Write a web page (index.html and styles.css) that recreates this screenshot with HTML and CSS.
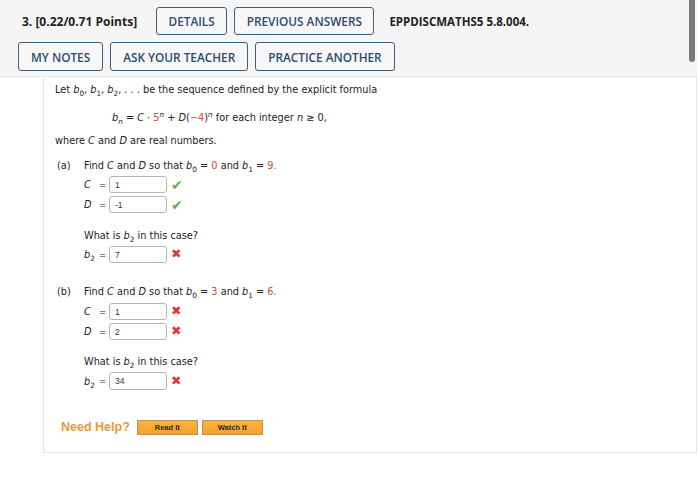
FILE: index.html
```html
<!DOCTYPE html>
<html>
<head>
<meta charset="utf-8">
<link rel="stylesheet" href="styles.css">
</head>
<body>
<div class="page">
  <div class="header">
    <div class="hrow">
      <span class="qnum">3. [0.22/0.71 Points]</span>
      <span class="btn">DETAILS</span>
      <span class="btn">PREVIOUS ANSWERS</span>
      <span class="qid">EPPDISCMATHS5 5.8.004.</span>
    </div>
    <div class="hrow row2">
      <span class="btn">MY NOTES</span>
      <span class="btn">ASK YOUR TEACHER</span>
      <span class="btn">PRACTICE ANOTHER</span>
    </div>
    <div class="scrollbar"></div>
  </div>
  <div class="panel">
    <div class="line l-let">Let <i>b</i><sub>0</sub>, <i>b</i><sub>1</sub>, <i>b</i><sub>2</sub>, . . . be the sequence defined by the explicit formula</div>
    <div class="line l-formula"><i>b</i><sub><i>n</i></sub> = <i>C</i> · <span class="red">5</span><sup><i>n</i></sup> + <i>D</i>(<span class="red">−4</span>)<sup><i>n</i></sup> for each integer <i>n</i> ≥ 0,</div>
    <div class="line l-where">where <i>C</i> and <i>D</i> are real numbers.</div>

    <div class="line part l-a"><span class="plabel">(a)</span><span>Find <i>C</i> and <i>D</i> so that <i>b</i><sub>0</sub> = <span class="red">0</span> and <i>b</i><sub>1</sub> = <span class="red">9.</span></span></div>
    <div class="ans first"><span class="var"><i>C</i></span><span class="eq">=</span><span class="inp">1</span><span class="ok">✔</span></div>
    <div class="ans second"><span class="var"><i>D</i></span><span class="eq">=</span><span class="inp">-1</span><span class="ok">✔</span></div>
    <div class="line sub l-what1">What is <i>b</i><sub>2</sub> in this case?</div>
    <div class="ans b2"><span class="var"><i>b</i><sub>2</sub></span><span class="eq">=</span><span class="inp">7</span><span class="bad">✖</span></div>

    <div class="line part l-b"><span class="plabel">(b)</span><span>Find <i>C</i> and <i>D</i> so that <i>b</i><sub>0</sub> = <span class="red">3</span> and <i>b</i><sub>1</sub> = <span class="red">6.</span></span></div>
    <div class="ans first-b"><span class="var"><i>C</i></span><span class="eq">=</span><span class="inp">1</span><span class="bad">✖</span></div>
    <div class="ans second"><span class="var"><i>D</i></span><span class="eq">=</span><span class="inp">2</span><span class="bad">✖</span></div>
    <div class="line sub l-what2">What is <i>b</i><sub>2</sub> in this case?</div>
    <div class="ans b2b"><span class="var"><i>b</i><sub>2</sub></span><span class="eq">=</span><span class="inp">34</span><span class="bad">✖</span></div>

    <div class="help">
      <span class="needhelp">Need Help?</span>
      <span class="hbtn">Read It</span>
      <span class="hbtn">Watch It</span>
    </div>
  </div>
</div>
</body>
</html>
```
FILE: styles.css
```css
html, body {
  margin: 0;
  padding: 0;
  background: #ffffff;
}
.page {
  width: 700px;
  height: 478px;
  position: relative;
  overflow: hidden;
}
.header {
  position: relative;
  width: 697px;
  height: 77px;
  box-sizing: border-box;
  background: #f5f5f5;
  border-bottom: 1px solid #e9e9e9;
  padding: 7px 0 0 18px;
  font-family: "Open Sans", "Noto Sans", sans-serif;
}
.hrow {
  display: flex;
  align-items: center;
  height: 28px;
}
.row2 {
  margin-top: 7px;
  height: 29px;
}
.row2 .btn {
  padding: 0 12px;
}
.qnum {
  margin-left: 4px;
  margin-right: 16px;
  width: 118px;
  white-space: nowrap;
  font-size: 12px;
  font-weight: 700;
  color: #222;
}
.qid {
  margin-left: 8px;
  font-size: 11.5px;
  font-weight: 700;
  color: #222;
}
.btn {
  box-sizing: border-box;
  height: 100%;
  display: flex;
  align-items: center;
  padding: 0 11.5px;
  margin-right: 7px;
  border: 1.5px solid #3e5d7c;
  border-radius: 3px;
  color: #2d4b6a;
  font-size: 11.8px;
  font-weight: 600;
  background: #f7f7f7;
}
.scrollbar {
  position: absolute;
  left: 689px;
  top: 0;
  width: 6px;
  height: 62px;
  background: #7a7a7a;
  border-radius: 0 0 3px 3px;
}
.panel {
  margin-left: 43px;
  width: 654px;
  height: 376px;
  box-sizing: border-box;
  border-left: 1px solid #e6e6e6;
  border-right: 1px solid #e6e6e6;
  border-bottom: 1px solid #e6e6e6;
  padding: 4px 0 0 11px;
  font-family: "DejaVu Sans", Verdana, sans-serif;
  font-size: 9.75px;
  color: #222;
}
.line {
  height: 15px;
  padding-top: 1px;
  line-height: 16px;
  white-space: nowrap;
}
sub, sup {
  font-size: 75%;
  line-height: 0;
}
sub { vertical-align: -3px; }
sup { vertical-align: 4px; }
.red { color: #d4473f; }
.l-formula { margin-top: 12px; margin-left: 57px; }
.l-where { margin-top: 7px; }
.part { display: flex; margin-left: 2px; }
.plabel { width: 27px; }
.l-a { margin-top: 9px; }
.l-b { margin-top: 20px; }
.sub { margin-left: 29px; }
.l-what1 { margin-top: 14px; }
.l-what2 { margin-top: 13px; }
.ans {
  display: flex;
  align-items: center;
  height: 17px;
  margin-left: 29px;
}
.ans.first { margin-top: 3px; }
.ans.first-b { margin-top: 4px; }
.ans.second { margin-top: 3px; }
.ans.b2 { margin-top: 3px; }
.ans.b2b { margin-top: 3px; height: 18px; }
.var { width: 15px; }
.eq { width: 10px; font-size: 8.5px; }
.inp {
  box-sizing: border-box;
  width: 58px;
  height: 100%;
  border: 1px solid #b5b5b5;
  border-radius: 3px;
  background: #fff;
  display: flex;
  align-items: center;
  padding-left: 5px;
  font-family: "Liberation Sans", Arial, sans-serif;
  font-size: 8.5px;
  color: #333;
}
.ok, .bad {
  margin-left: 4px;
  line-height: 1;
}
.ok { color: #5cb352; font-size: 14px; }
.bad { color: #dc3b3b; font-size: 12.5px; }
.help {
  display: flex;
  align-items: center;
  height: 16px;
  margin-top: 29px;
  margin-left: 6px;
}
.needhelp {
  font-family: "Liberation Sans", Arial, sans-serif;
  font-weight: 700;
  font-size: 12.5px;
  color: #e49a3c;
  margin-right: 7px;
}
.hbtn {
  box-sizing: border-box;
  width: 61px;
  height: 15px;
  margin-right: 4px;
  display: flex;
  align-items: center;
  justify-content: center;
  background: linear-gradient(#fbb444, #f6a02a);
  border: 1.5px solid #b8915c;
  font-family: "Liberation Sans", Arial, sans-serif;
  font-weight: 700;
  font-size: 7.5px;
  color: #2a2a2a;
}
```
